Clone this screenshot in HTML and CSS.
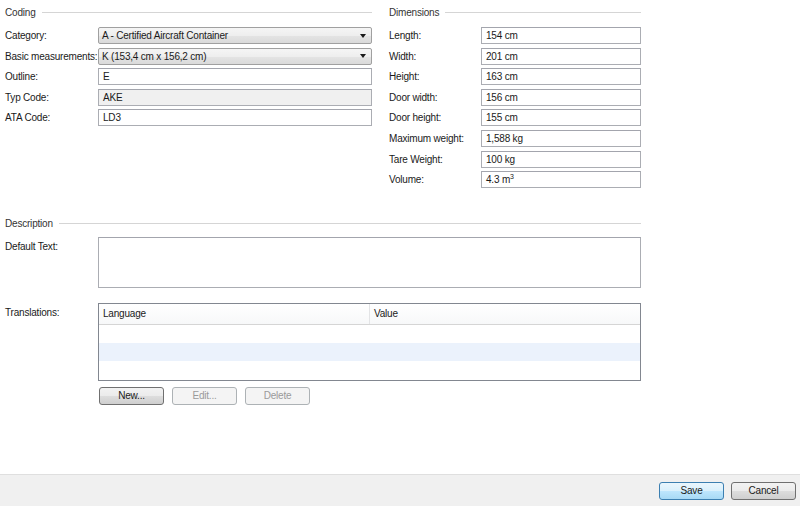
FILE: index.html
```html
<!DOCTYPE html>
<html lang="en">
<head>
  <meta charset="UTF-8">
  <title>Container Type</title>
  <link rel="stylesheet" href="styles.css">
</head>
<body>

<div class="window">
  <div class="content">

    <div class="top">
      <div class="group coding">
        <div class="group-title"><span>Coding</span></div>
        <div class="row">
          <label>Category:</label>
          <div class="combo"><span>A - Certified Aircraft Container</span><i class="arrow"></i></div>
        </div>
        <div class="row">
          <label>Basic measurements:</label>
          <div class="combo"><span>K (153,4 cm x 156,2 cm)</span><i class="arrow"></i></div>
        </div>
        <div class="row">
          <label>Outline:</label>
          <div class="field">E</div>
        </div>
        <div class="row">
          <label>Typ Code:</label>
          <div class="field readonly">AKE</div>
        </div>
        <div class="row">
          <label>ATA Code:</label>
          <div class="field">LD3</div>
        </div>
      </div>

      <div class="group dimensions">
        <div class="group-title"><span>Dimensions</span></div>
        <div class="row"><label>Length:</label><div class="field">154 cm</div></div>
        <div class="row"><label>Width:</label><div class="field">201 cm</div></div>
        <div class="row"><label>Height:</label><div class="field">163 cm</div></div>
        <div class="row"><label>Door width:</label><div class="field">156 cm</div></div>
        <div class="row"><label>Door height:</label><div class="field">155 cm</div></div>
        <div class="row"><label>Maximum weight:</label><div class="field">1,588 kg</div></div>
        <div class="row"><label>Tare Weight:</label><div class="field">100 kg</div></div>
        <div class="row"><label>Volume:</label><div class="field">4.3 m<sup>3</sup></div></div>
      </div>
    </div>

    <div class="group description">
      <div class="group-title"><span>Description</span></div>
      <div class="row tall">
        <label>Default Text:</label>
        <div class="field textarea"></div>
      </div>
      <div class="row grid-row">
        <label>Translations:</label>
        <div class="grid-wrap">
          <div class="grid">
            <div class="grid-head">
              <div class="col lang">Language</div>
              <div class="col value">Value</div>
            </div>
            <div class="grid-line"></div>
            <div class="grid-line alt"></div>
            <div class="grid-line"></div>
          </div>
          <div class="grid-buttons">
            <button class="btn">New...</button>
            <button class="btn" disabled>Edit...</button>
            <button class="btn" disabled>Delete</button>
          </div>
        </div>
      </div>
    </div>

  </div>

  <div class="footer">
    <button class="btn default">Save</button>
    <button class="btn">Cancel</button>
  </div>
</div>

</body>
</html>
```

FILE: styles.css
```css
body {
  margin: 0;
  font-family: "Liberation Sans", Arial, sans-serif;
  font-size: 10px;
  letter-spacing: -0.2px;
  color: #1a1a1a;
  background: #ffffff;
}

.window {
  width: 800px;
  height: 506px;
  display: flex;
  flex-direction: column;
}

.content {
  flex: 1;
  padding: 5px 0 0 5px;
}

.top {
  display: flex;
  gap: 17px;
}

.coding {
  width: 367px;
}

.dimensions {
  width: 252px;
}

.description {
  width: 636px;
  margin-top: 25px;
}

.group-title {
  display: flex;
  align-items: center;
  height: 14px;
  margin-bottom: 8px;
  color: #333333;
}

.group-title::after {
  content: "";
  flex: 1;
  height: 1px;
  background: #d5d5d5;
  margin-left: 6px;
}

.description .group-title {
  margin-bottom: 6px;
}

.row {
  display: flex;
  align-items: center;
  height: 17px;
  margin-bottom: 3.6px;
}

.row label {
  width: 93px;
  flex: none;
  white-space: nowrap;
}

.dimensions .row label {
  width: 92px;
}

.field,
.combo {
  flex: 1;
  height: 17px;
  box-sizing: border-box;
  border: 1px solid #abadb3;
  border-top-color: #a3a5ad;
  background: #ffffff;
  padding: 0 4px;
  line-height: 15px;
  white-space: nowrap;
  overflow: hidden;
}

.field sup {
  font-size: 7px;
  vertical-align: top;
  line-height: 9px;
}

.readonly {
  background: #f0f0f0;
}

.combo {
  display: flex;
  align-items: center;
  justify-content: space-between;
  border-color: #a0a0a0;
  border-radius: 2px;
  background: linear-gradient(#f5f5f5, #eeeeee 50%, #e4e4e4 51%, #dadada);
  padding: 0 5px 0 3px;
}

.arrow {
  width: 0;
  height: 0;
  border-left: 3px solid transparent;
  border-right: 3px solid transparent;
  border-top: 4px solid #1a1a1a;
}

.row.tall {
  align-items: flex-start;
  height: 51px;
  margin-bottom: 15px;
}

.row.tall label,
.grid-row label {
  padding-top: 4px;
}

.textarea {
  height: 51px;
}

.grid-row {
  align-items: flex-start;
  height: auto;
}

.grid-wrap {
  flex: 1;
}

.grid {
  height: 78px;
  box-sizing: border-box;
  border: 1px solid #828790;
  background: #ffffff;
}

.grid-head {
  display: flex;
  height: 20px;
  background: linear-gradient(#ffffff, #f7f8f9);
  border-bottom: 1px solid #d5d5d5;
}

.col {
  box-sizing: border-box;
  padding: 4px 0 0 4px;
}

.col.lang {
  width: 271px;
  border-right: 1px solid #e3e4e6;
}

.col.value {
  flex: 1;
}

.grid-line {
  height: 18px;
}

.grid-line.alt {
  background: #ebf2fc;
}

.grid-buttons {
  display: flex;
  gap: 8px;
  margin-top: 6px;
  padding-left: 1px;
}

.btn {
  width: 65px;
  height: 18px;
  padding: 0;
  font-family: inherit;
  font-size: 10px;
  letter-spacing: inherit;
  color: #1a1a1a;
  border: 1px solid #707070;
  border-radius: 3px;
  background: linear-gradient(#f2f2f2, #ebebeb 50%, #dddddd 51%, #cfcfcf);
}

.btn:disabled {
  color: #9a9a9a;
  border-color: #adb2b5;
  background: #f4f4f4;
}

.btn.default {
  border-color: #3c7fb1;
  background: linear-gradient(#eaf6fd, #d9f0fc 50%, #bee6fd 51%, #a7d9f5);
}

.footer {
  height: 31px;
  border-top: 1px solid #dfdfdf;
  background: #f0f0f0;
  display: flex;
  justify-content: flex-end;
  align-items: center;
  gap: 7px;
  padding-right: 4px;
}
```
